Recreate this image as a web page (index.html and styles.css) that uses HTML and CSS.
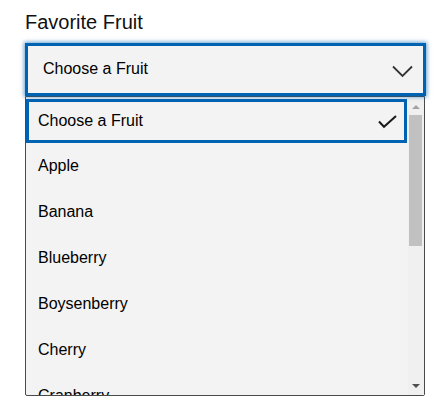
FILE: index.html
```html
<!DOCTYPE html>
<html>
<head>
<meta charset="utf-8">
<link rel="stylesheet" href="styles.css">
</head>
<body>
<div class="field">
  <label class="label">Favorite Fruit</label>
  <div class="select">
    <span class="value">Choose a Fruit</span>
    <svg class="chevron" width="21" height="13" viewBox="0 0 21 13"><path d="M1 1.5 L10.5 11 L20 1.5" fill="none" stroke="#333" stroke-width="1.8"/></svg>
  </div>
  <div class="listbox">
    <ul class="options">
      <li class="option selected">Choose a Fruit
        <svg class="check" width="19" height="14" viewBox="0 0 19 14"><path d="M1 6.5 L6 11.8 L18 1" fill="none" stroke="#1a1a1a" stroke-width="2"/></svg>
      </li>
      <li class="option">Apple</li>
      <li class="option">Banana</li>
      <li class="option">Blueberry</li>
      <li class="option">Boysenberry</li>
      <li class="option">Cherry</li>
      <li class="option">Cranberry</li>
    </ul>
    <div class="scrollbar">
      <div class="btn"><span class="arrow-up"></span></div>
      <div class="track"><div class="thumb"></div></div>
      <div class="btn"><span class="arrow-down"></span></div>
    </div>
  </div>
</div>
</body>
</html>
```
FILE: styles.css
```css
html, body {
  margin: 0;
  padding: 0;
  background: #fff;
}
body {
  font-family: "Liberation Sans", Arial, sans-serif;
  color: #000;
}
.field {
  padding: 11px 0 0 25px;
  width: 401px;
}
.label {
  display: block;
  font-size: 20px;
  line-height: 23px;
  margin-bottom: 9px;
  color: #111;
}
.select {
  box-sizing: border-box;
  width: 401px;
  height: 53px;
  border: 3px solid #0063b1;
  box-shadow: 0 0 4px 1px rgba(0, 99, 177, 0.6);
  background: #f3f3f3;
  display: flex;
  align-items: center;
  justify-content: space-between;
  padding: 0 10px 0 15px;
  font-size: 16px;
  position: relative;
  z-index: 1;
}
.value {
  margin-top: -2px;
}
.chevron {
  display: block;
  margin-top: 3px;
}
.listbox {
  box-sizing: border-box;
  width: 400px;
  height: 300px;
  border: 1px solid #4a4a4a;
  border-radius: 0 0 2px 2px;
  background: #f3f3f3;
  display: flex;
}
.options {
  flex: 1;
  list-style: none;
  margin: 0;
  padding: 0;
  overflow: hidden;
}
.option {
  box-sizing: border-box;
  height: 46px;
  display: flex;
  align-items: center;
  padding-left: 12px;
  font-size: 16px;
}
.option.selected {
  height: 44px;
  margin: 2px 1px 0 0;
  border: 3px solid #0063b1;
  padding: 0 7px 0 9px;
  justify-content: space-between;
}
.check {
  display: block;
  margin-top: 2px;
}
.scrollbar {
  width: 16px;
  background: #f0f0f0;
  display: flex;
  flex-direction: column;
}
.btn {
  height: 17px;
  display: flex;
  align-items: center;
  justify-content: center;
}
.arrow-up {
  width: 0;
  height: 0;
  border-left: 4px solid transparent;
  border-right: 4px solid transparent;
  border-bottom: 4px solid #a3a3a3;
  margin-top: 2px;
}
.arrow-down {
  width: 0;
  height: 0;
  border-left: 4px solid transparent;
  border-right: 4px solid transparent;
  border-top: 4px solid #505050;
  margin-bottom: 2px;
}
.track {
  flex: 1;
  padding: 1px 2px 0 1px;
}
.thumb {
  height: 131px;
  background: #c1c1c1;
}
```
